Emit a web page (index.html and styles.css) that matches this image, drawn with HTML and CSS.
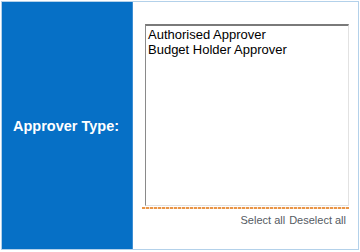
FILE: index.html
```html
<!DOCTYPE html>
<html>
<head>
<meta charset="utf-8">
<link rel="stylesheet" href="styles.css">
</head>
<body>
<div class="frame">
  <div class="label-cell">
    <span class="label">Approver Type:</span>
  </div>
  <div class="field-cell">
    <div class="listbox">
      <div class="option">Authorised Approver</div>
      <div class="option">Budget Holder Approver</div>
    </div>
    <div class="dots"></div>
    <div class="actions">
      <span class="action">Select all</span>
      <span class="action">Deselect all</span>
    </div>
  </div>
</div>
</body>
</html>
```

FILE: styles.css
```css
html, body {
  margin: 0;
  padding: 0;
  background: #ffffff;
}
body {
  width: 360px;
  height: 252px;
  overflow: hidden;
}
.frame {
  margin: 1px 1px 0 1px;
  width: 356px;
  height: 247px;
  border: 1px solid #b3d1ea;
  display: flex;
  background: #ffffff;
}
.label-cell {
  width: 130px;
  background: #0670c6;
  display: flex;
  align-items: center;
  justify-content: center;
  border-right: 1px solid #3d8fd4;
}
.label {
  font-family: "Liberation Sans", Arial, sans-serif;
  font-weight: bold;
  font-size: 14.5px;
  color: #ffffff;
  margin-left: -2px;
}
.field-cell {
  flex: 1;
  padding: 22px 0 0 12px;
  display: flex;
  flex-direction: column;
}
.listbox {
  width: 200px;
  height: 178px;
  border-top: 2px solid #7a7a7a;
  border-left: 1px solid #8a8a8a;
  border-right: 1px solid #e2e2e2;
  border-bottom: 1px solid #e2e2e2;
  padding: 1px 0 0 2px;
  box-sizing: content-box;
  font-family: "Liberation Sans", Arial, sans-serif;
  font-size: 13px;
  line-height: 15px;
  color: #000000;
}
.dots {
  margin: 1px 0 0 -3px;
  width: 207px;
  height: 2px;
  background: repeating-linear-gradient(90deg, #e99548 0 3px, #fbe3cc 3px 4px);
}
.actions {
  width: 201px;
  display: flex;
  justify-content: flex-end;
  gap: 4px;
  margin-top: 5px;
  font-family: "Liberation Sans", Arial, sans-serif;
  font-size: 11px;
  color: #555b63;
}
```
